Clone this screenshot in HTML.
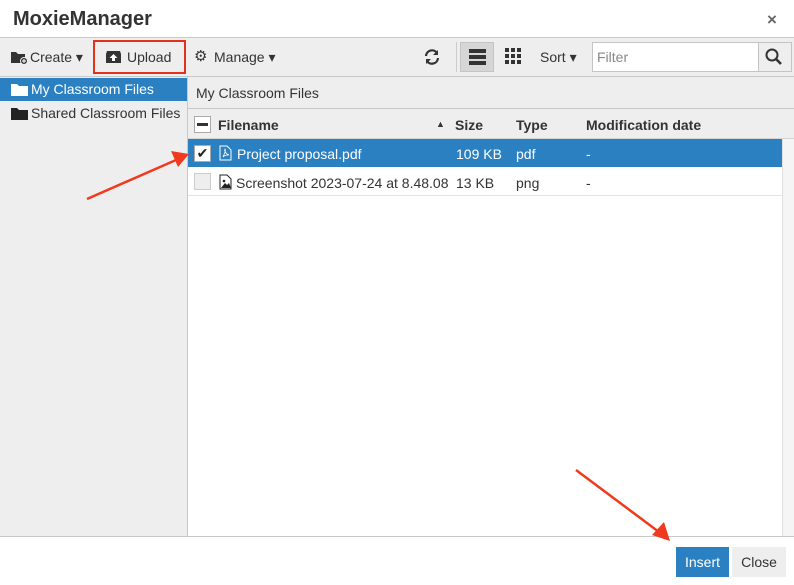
<!DOCTYPE html>
<html><head><style>
*{box-sizing:border-box;margin:0;padding:0}
body{width:794px;height:585px;overflow:hidden;background:#fff;font-family:"Liberation Sans",Arial,sans-serif;color:#333;position:relative;font-size:14px}
.a{position:absolute}
</style></head><body>
<div class="a" style="left:13px;top:8px;font-size:20px;font-weight:bold;color:#333">MoxieManager</div>
<div class="a" style="left:767px;top:10px;font-size:17px;font-weight:bold;color:#666">×</div>
<div class="a" style="left:0;top:37px;width:794px;height:40px;background:#eee;border-top:1px solid #c8c8c8;border-bottom:1px solid #c8c8c8"></div>
<!-- toolbar -->
<svg class="a" style="left:10px;top:49px" width="18" height="16" viewBox="0 0 18 16"><path d="M1 3h5l2 2h7v9H1z" fill="#333"/><circle cx="14" cy="12" r="3.5" fill="#333" stroke="#eee"/><path d="M14 10v4M12 12h4" stroke="#eee" stroke-width="1.2"/></svg>
<div class="a" style="left:30px;top:49px">Create ▾</div>
<div class="a" style="left:93px;top:40px;width:93px;height:34px;border:2px solid #e53020"></div>
<svg class="a" style="left:105px;top:49px" width="17" height="15" viewBox="0 0 17 15"><path d="M2 2h13l1 3v9H1V5z" fill="#333"/><path d="M8.5 5l-4 4h2.5v3h3V9h2.5z" fill="#fff"/></svg>
<div class="a" style="left:127px;top:49px">Upload</div>
<div class="a" style="left:194px;top:47px;font-size:15px">⚙</div>
<div class="a" style="left:214px;top:49px">Manage ▾</div>
<svg class="a" style="left:423px;top:48px" width="18" height="18" viewBox="0 0 18 18"><path d="M3 8a6 6 0 0 1 11-3M15 10a6 6 0 0 1-11 3" stroke="#333" stroke-width="2.2" fill="none"/><path d="M15 2v5h-5zM3 16v-5h5z" fill="#333"/></svg>
<div class="a" style="left:456px;top:42px;width:1px;height:30px;background:#ccc"></div>
<div class="a" style="left:460px;top:42px;width:34px;height:30px;background:#d6d6d6;border:1px solid #c4c4c4"></div>
<div class="a" style="left:469px;top:49px;width:17px;height:4px;background:#333;box-shadow:0 6px 0 #333,0 12px 0 #333"></div>
<svg class="a" style="left:505px;top:48px" width="17" height="17"><g fill="#333"><rect x="0" y="0" width="4" height="4"/><rect x="6" y="0" width="4" height="4"/><rect x="12" y="0" width="4" height="4"/><rect x="0" y="6" width="4" height="4"/><rect x="6" y="6" width="4" height="4"/><rect x="12" y="6" width="4" height="4"/><rect x="0" y="12" width="4" height="4"/><rect x="6" y="12" width="4" height="4"/><rect x="12" y="12" width="4" height="4"/></g></svg>
<div class="a" style="left:540px;top:49px">Sort ▾</div>
<div class="a" style="left:592px;top:42px;width:167px;height:30px;background:#fff;border:1px solid #c4c4c4;padding:6px 4px;color:#888">Filter</div>
<div class="a" style="left:758px;top:42px;width:34px;height:30px;background:#eee;border:1px solid #c4c4c4"></div>
<svg class="a" style="left:765px;top:48px" width="18" height="18"><circle cx="7" cy="7" r="5.5" stroke="#333" stroke-width="2" fill="none"/><path d="M11 11l5 5" stroke="#333" stroke-width="2.6"/></svg>
<!-- sidebar -->
<div class="a" style="left:0;top:77px;width:188px;height:459px;background:#eee;border-right:1px solid #c8c8c8"></div>
<div class="a" style="left:0;top:78px;width:187px;height:23px;background:#2a80c0"></div>
<svg class="a" style="left:11px;top:83px" width="17" height="13"><path d="M0 1h6l2 2h9v10H0z" fill="#fff"/></svg>
<div class="a" style="left:31px;top:81px;color:#fff">My Classroom Files</div>
<svg class="a" style="left:11px;top:107px" width="17" height="13"><path d="M0 1h6l2 2h9v10H0z" fill="#222"/></svg>
<div class="a" style="left:31px;top:105px">Shared Classroom Files</div>
<!-- main -->
<div class="a" style="left:188px;top:77px;width:606px;height:32px;background:#eee;border-bottom:1px solid #c8c8c8"></div>
<div class="a" style="left:196px;top:85px">My Classroom Files</div>
<div class="a" style="left:188px;top:109px;width:606px;height:30px;background:#eee;border-bottom:1px solid #d4d4d4"></div>
<div class="a" style="left:194px;top:116px;width:17px;height:17px;background:#fff;border:1px solid #aaa"></div>
<div class="a" style="left:197px;top:123px;width:11px;height:3px;background:#333"></div>
<div class="a" style="left:218px;top:117px;font-weight:bold">Filename</div>
<div class="a" style="left:436px;top:119px;font-size:9px">▲</div>
<div class="a" style="left:455px;top:117px;font-weight:bold">Size</div>
<div class="a" style="left:516px;top:117px;font-weight:bold">Type</div>
<div class="a" style="left:586px;top:117px;font-weight:bold">Modification date</div>
<div class="a" style="left:782px;top:139px;width:12px;height:397px;background:#f5f5f5;border-left:1px solid #e0e0e0"></div>
<div class="a" style="left:188px;top:139px;width:594px;height:28px;background:#2a80c0"></div>
<div class="a" style="left:194px;top:145px;width:17px;height:17px;background:#fff;border:1px solid #aaa;font-size:14px;line-height:15px;text-align:center;color:#222">✔</div>
<svg class="a" style="left:219px;top:145px" width="13" height="16"><path d="M1 1h7l4 4v10H1z" fill="none" stroke="#fff"/><path d="M4 12c2-5 3-6 2-8 -1 2 1 5 4 6-3 0-4 0-6 2z" fill="none" stroke="#fff" stroke-width=".8"/></svg>
<div class="a" style="left:237px;top:146px;color:#fff">Project proposal.pdf</div>
<div class="a" style="left:456px;top:146px;color:#fff">109 KB</div>
<div class="a" style="left:516px;top:146px;color:#fff">pdf</div>
<div class="a" style="left:586px;top:146px;color:#fff">-</div>
<div class="a" style="left:188px;top:167px;width:594px;height:29px;border-bottom:1px solid #e4e4e4"></div>
<div class="a" style="left:194px;top:173px;width:17px;height:17px;background:#eee;border:1px solid #ccc"></div>
<svg class="a" style="left:219px;top:174px" width="13" height="16"><path d="M1 1h7l4 4v10H1z" fill="none" stroke="#222"/><path d="M2 14l4-5 2 2 2-2 2 5z" fill="#222"/><circle cx="5" cy="7" r="1.3" fill="#222"/></svg>
<div class="a" style="left:236px;top:175px;white-space:nowrap">Screenshot 2023-07-24 at 8.48.08</div>
<div class="a" style="left:456px;top:175px">13 KB</div>
<div class="a" style="left:516px;top:175px">png</div>
<div class="a" style="left:586px;top:175px">-</div>
<!-- footer -->
<div class="a" style="left:0;top:536px;width:794px;height:1px;background:#c8c8c8"></div>
<div class="a" style="left:676px;top:547px;width:53px;height:30px;background:#2a80c0;color:#fff;text-align:center;line-height:30px">Insert</div>
<div class="a" style="left:732px;top:547px;width:54px;height:30px;background:#eee;text-align:center;line-height:30px">Close</div>
<!-- arrows -->
<svg class="a" style="left:0;top:0" width="794" height="585"><g stroke="#f03a1e" stroke-width="2.5" fill="#f03a1e"><line x1="87" y1="199" x2="176" y2="160"/><polygon points="189,154 171,151 178,167" stroke="none"/><line x1="576" y1="470" x2="659" y2="532"/><polygon points="670,541 652,535 664,522" stroke="none"/></g></svg>
</body></html>
